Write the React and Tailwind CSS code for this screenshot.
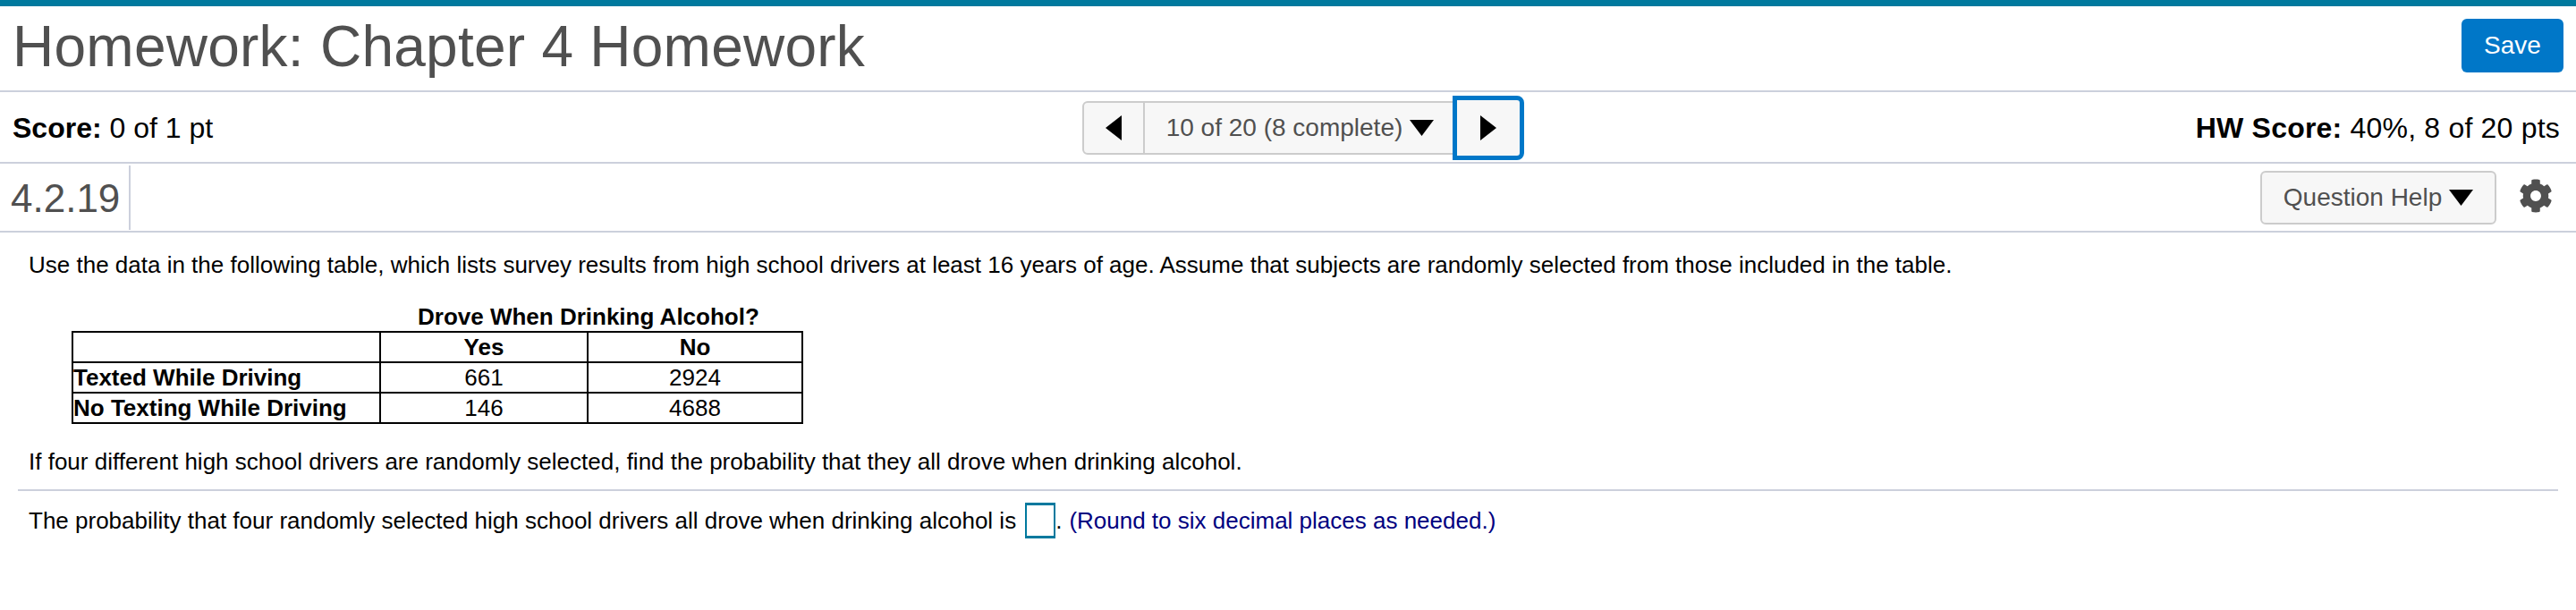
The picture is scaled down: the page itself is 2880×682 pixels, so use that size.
import React from 'react';
import { FaCog } from 'react-icons/fa';

const Caret = () => (
  <svg width="27" height="18" viewBox="0 0 27 18" className="shrink-0">
    <polygon points="0,0 27,0 13.5,18" fill="#000" />
  </svg>
);

const Arrow = ({ left }) => (
  <svg width="18" height="28" viewBox="0 0 18 28">
    <polygon points={left ? '18,0 18,28 0,14' : '0,0 0,28 18,14'} fill="#000" />
  </svg>
);

const rows = [
  ['Texted While Driving', '661', '2924'],
  ['No Texting While Driving', '146', '4688'],
];

const App = () => {
  return (
    <div className="min-h-[682px] bg-white font-['Liberation_Sans',Arial,sans-serif] text-black">
      <div className="h-[7px] bg-[#00799e]" />

      {/* Title */}
      <div className="h-[96px] flex items-center justify-between pl-[14px] pr-[14px] border-b-2 border-[#ccd0dc]">
        <h1 className="text-[64px] leading-none text-[#505050] tracking-[0.25px] pb-[4px]">Homework: Chapter 4 Homework</h1>
        <button className="w-[114px] h-[60px] mt-[-6px] rounded-[6px] bg-[#0077c8] text-white text-[28px]">Save</button>
      </div>

      {/* Score bar */}
      <div className="h-[80px] grid grid-cols-3 items-center pl-[14px] pr-[18px] pt-[2px] border-b-2 border-[#ccd0dc] text-[32px]">
        <div><span className="font-bold">Score:</span> 0 of 1 pt</div>
        <div className="flex justify-center pl-[39px]">
          <div className="flex h-[60px] items-stretch text-[28px] text-[#505050]">
            <button className="w-[70px] flex items-center justify-center bg-[#f7f7f7] border-2 border-[#ccc] rounded-l-[6px]">
              <Arrow left />
            </button>
            <button className="w-[344px] flex items-center justify-center gap-[8px] pl-[2px] bg-[#f7f7f7] border-y-2 border-[#ccc]">
              10 of 20 (8 complete) <Caret />
            </button>
            <button className="w-[80px] h-[72px] mt-[-6px] flex items-center justify-center bg-[#f7f7f7] border-[5px] border-[#0077c8] rounded-r-[8px]">
              <Arrow />
            </button>
          </div>
        </div>
        <div className="text-right tracking-[0.2px]"><span className="font-bold">HW Score:</span> 40%, 8 of 20 pts</div>
      </div>

      {/* Question id */}
      <div className="h-[77px] flex items-center justify-between pl-[12px] pr-[26px] border-b-2 border-[#ccd0dc]">
        <div className="h-[72px] w-[134px] flex items-center pt-[3px] border-r-2 border-[#ccd0dc] text-[44px] text-[#505050]">4.2.19</div>
        <div className="flex items-center gap-[25px]">
          <button className="w-[264px] h-[60px] flex items-center justify-center gap-[8px] bg-[#f7f7f7] border-2 border-[#ccc] rounded-[6px] text-[28px] text-[#505050]">
            Question Help <Caret />
          </button>
          <FaCog className="text-[38px] text-[#505050] mt-[-3px]" />
        </div>
      </div>

      {/* Question */}
      <div className="px-[20px] pt-[20px] text-[26px] leading-[32px]">
        <p className="pl-[12px]">Use the data in the following table, which lists survey results from high school drivers at least 16 years of age. Assume that subjects are randomly selected from those included in the table.</p>

        <div className="ml-[60px] mt-[26px] w-[818px]">
          <div className="pl-[387px] w-[818px] h-[32px] font-bold text-[26px] whitespace-nowrap">Drove When Drinking Alcohol?</div>
          <table className="w-[818px] table-fixed border-collapse border-2 border-black text-[26px] leading-[32px]">
            <tbody>
              <tr className="h-[34px]">
                <td className="w-[344px] border-2 border-black" />
                <td className="w-[232px] border-2 border-black text-center font-bold">Yes</td>
                <td className="border-2 border-black text-center font-bold">No</td>
              </tr>
              {rows.map((row) => (
                <tr key={row[0]} className="h-[34px]">
                  <td className="border-2 border-black font-bold">{row[0]}</td>
                  <td className="border-2 border-black text-center">{row[1]}</td>
                  <td className="border-2 border-black text-center">{row[2]}</td>
                </tr>
              ))}
            </tbody>
          </table>
        </div>

        <p className="pl-[12px] mt-[26px]">If four different high school drivers are randomly selected, find the probability that they all drove when drinking alcohol.</p>

        <div className="mt-[15px] border-t-2 border-[#ccd0dc] pl-[12px] pt-[13px] flex items-center">
          <span>The probability that four randomly selected high school drivers all drove when drinking alcohol is</span>
          <span className="inline-block w-[34px] h-[40px] ml-[10px] mr-[9px] border-x-2 border-y-[3px] border-[#00799e]" />
          <span className="ml-[-9px]">.</span>
          <span className="ml-[8px] text-[#000080]">(Round to six decimal places as needed.)</span>
        </div>
      </div>
    </div>
  );
};

export default App;
